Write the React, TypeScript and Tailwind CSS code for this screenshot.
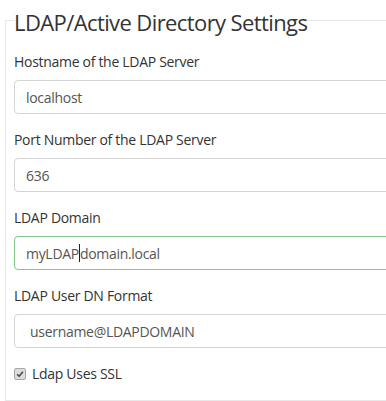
import React from "react";

const font = { fontFamily: '"Open Sans", "Noto Sans", sans-serif' };

function Field({ label, children }: { label: string; children: React.ReactNode }) {
  return (
    <div className="mb-[16px]">
      <div className="mb-[8px] text-[14px] leading-5 tracking-[-0.3px] text-[#333]">{label}</div>
      {children}
    </div>
  );
}

export default function App() {
  return (
    <div className="h-[401px] w-[386px] overflow-hidden bg-white" style={font}>
      <fieldset className="ml-[5px] w-[600px] border border-[#e8e8e8] px-[8px] pb-4 pt-[12px]">
        <legend className="text-[22px] leading-[40px] tracking-[-0.6px] text-[#333]">
          <span className="relative top-[2px]">LDAP/Active Directory Settings</span>
        </legend>
        <Field label="Hostname of the LDAP Server">
          <div className="flex h-[34px] items-center rounded-[4px] border border-[#d5d5d5] pl-[11px] text-[14px] tracking-[-0.3px] text-[#555]">
            localhost
          </div>
        </Field>
        <Field label="Port Number of the LDAP Server">
          <div className="flex h-[34px] items-center rounded-[4px] border border-[#d5d5d5] pl-[11px] text-[14px] tracking-[-0.3px] text-[#555]">
            636
          </div>
        </Field>
        <Field label="LDAP Domain">
          <div className="flex h-[34px] items-center rounded-[4px] border border-[#7fc98a] pl-[11px] text-[14px] tracking-[-0.3px] text-[#555]">
            <span>myLDAP</span>
            <span className="inline-block h-[18px] w-px bg-[#222]" />
            <span>domain.local</span>
          </div>
        </Field>
        <Field label="LDAP User DN Format">
          <div className="flex h-[34px] items-center rounded-[4px] border border-[#d5d5d5] pl-[15px] text-[14px] tracking-[-0.3px] text-[#555]">
            username@LDAPDOMAIN
          </div>
        </Field>
        <div className="flex items-center gap-[6px] text-[14px] leading-5 tracking-[-0.3px] text-[#333]">
          <span className="flex h-[12px] w-[12px] items-center justify-center rounded-[2px] border border-[#a8a8a8] bg-[#dcdcdc]">
            <svg viewBox="0 0 12 12" className="h-[10px] w-[10px]">
              <path d="M2.5 6.2 L5 8.6 L9.5 3.2" fill="none" stroke="#444" strokeWidth="1.8" />
            </svg>
          </span>
          <span>Ldap Uses SSL</span>
        </div>
      </fieldset>
    </div>
  );
}
